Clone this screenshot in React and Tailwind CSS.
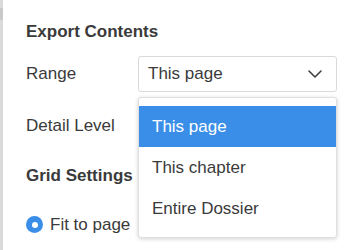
import React from "react";

const options = ["This page", "This chapter", "Entire Dossier"];

function Chevron() {
  return (
    <svg width="14" height="8" viewBox="0 0 14 8" fill="none">
      <path d="M1 1l6 6 6-6" stroke="#3a3a3a" strokeWidth="1.5" strokeLinecap="round" strokeLinejoin="round" />
    </svg>
  );
}

export default function App() {
  return (
    <div
      className="flex w-[364px] h-[250px] bg-white text-[#3a3a3a] overflow-hidden"
      style={{ fontFamily: '"Liberation Sans", Arial, sans-serif' }}
    >
      {/* left scroll edge */}
      <div className="w-[3px] h-full bg-[#dadada] flex flex-col">
        <div className="h-[8px]" />
        <div className="h-[12px] bg-[#c9c9c9]" />
      </div>

      <div className="flex-1 pl-[23px] pt-[20px]">
        <div className="h-[24px] flex items-center text-[17px] font-bold">Export Contents</div>

        <div className="flex items-center mt-[12px]">
          <div className="w-[112px] text-[17px]">Range</div>
          <div className="relative w-[199px]">
            <div className="h-[36px] flex items-center justify-between pl-[9px] pr-[14px] border border-[#d9d9d9] rounded-[3px] text-[17px]">
              <span>This page</span>
              <Chevron />
            </div>
            <div className="absolute left-0 right-0 top-[41px] z-10 bg-white border border-[#e0e0e0] rounded-[3px] shadow-[0_1px_4px_rgba(0,0,0,0.18)] pt-[8px] pb-[8px]">
              {options.map((o, i) => (
                <div
                  key={o}
                  className={
                    i === 0
                      ? "h-[41px] flex items-center pl-[13px] text-[17px] bg-[#3b8ee8] text-white"
                      : "h-[41px] flex items-center pl-[13px] text-[17px]"
                  }
                >
                  {o}
                </div>
              ))}
            </div>
          </div>
        </div>

        <div className="flex items-center h-[36px] mt-[16px]">
          <div className="w-[112px] text-[17px]">Detail Level</div>
        </div>

        <div className="h-[24px] flex items-center mt-[20px] text-[17px] font-bold">Grid Settings</div>

        <div className="flex items-center mt-[24px] gap-[7px]">
          <div className="w-[17px] h-[17px] rounded-full bg-[#3b8ee8] flex items-center justify-center">
            <div className="w-[6px] h-[6px] rounded-full bg-white" />
          </div>
          <span className="text-[17px]">Fit to page</span>
        </div>
      </div>
    </div>
  );
}
